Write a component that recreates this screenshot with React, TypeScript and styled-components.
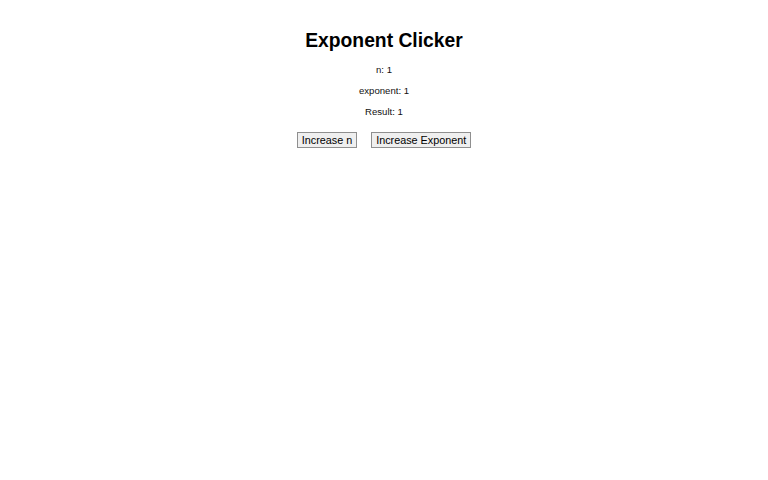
import styled, { createGlobalStyle } from "styled-components";
import { useState } from "react";

const GlobalStyle = createGlobalStyle`
  body {
    margin: 0;
    background: #ffffff;
    font-family: "Liberation Sans", Arial, sans-serif;
    color: #000;
  }
`;

const Page = styled.div`
  display: flex;
  flex-direction: column;
  align-items: center;
  padding-top: 29px;
`;

const Title = styled.h1`
  margin: 0 0 12px;
  font-size: 19.3px;
  font-weight: bold;
  line-height: 23px;
`;

const Line = styled.p`
  margin: 0 0 9px;
  font-size: 9.6px;
  line-height: 12px;
  color: #111;
`;

const Buttons = styled.div`
  display: flex;
  gap: 14px;
  margin-top: 5px;
`;

const Button = styled.button`
  font-family: "Liberation Sans", Arial, sans-serif;
  font-size: 10.8px;
  line-height: 12px;
  height: 16px;
  padding: 1px 4px;
  background: #efefef;
  border: 1px solid #8f8f8f;
  border-radius: 0;
  color: #000;
`;

export default function App() {
  const [n, setN] = useState(1);
  const [exponent, setExponent] = useState(1);

  return (
    <Page>
      <GlobalStyle />
      <Title>Exponent Clicker</Title>
      <Line>n: {n}</Line>
      <Line>exponent: {exponent}</Line>
      <Line>Result: {Math.pow(n, exponent)}</Line>
      <Buttons>
        <Button onClick={() => setN(n + 1)}>Increase n</Button>
        <Button onClick={() => setExponent(exponent + 1)}>Increase Exponent</Button>
      </Buttons>
    </Page>
  );
}
